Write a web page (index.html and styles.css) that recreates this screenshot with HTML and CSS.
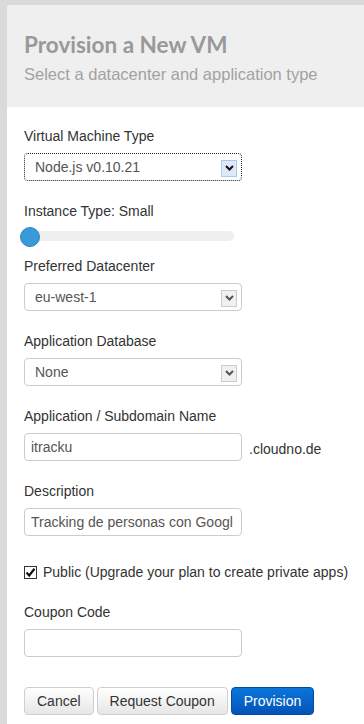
FILE: index.html
```html
<!DOCTYPE html>
<html lang="en">
<head>
<meta charset="utf-8">
<title>Provision a New VM</title>
<link rel="stylesheet" href="styles.css">
</head>
<body>
<div class="panel">
  <div class="panel-head">
    <h1 class="title">Provision a New VM</h1>
    <p class="subtitle">Select a datacenter and application type</p>
  </div>
  <form class="panel-body">
    <div class="group">
      <label class="label">Virtual Machine Type</label>
      <div class="select select-focus">
        <span class="select-text">Node.js v0.10.21</span>
        <span class="arrow arrow-hover"><svg width="9" height="6" viewBox="0 0 9 6"><path d="M1 1 L4.5 4.5 L8 1" fill="none" stroke="#111" stroke-width="2"/></svg></span>
      </div>
    </div>
    <div class="group group-slider">
      <label class="label">Instance Type: Small</label>
      <div class="slider">
        <div class="slider-track"></div>
        <div class="slider-thumb"></div>
      </div>
    </div>
    <div class="group">
      <label class="label">Preferred Datacenter</label>
      <div class="select">
        <span class="select-text">eu-west-1</span>
        <span class="arrow"><svg width="9" height="6" viewBox="0 0 9 6"><path d="M1 1 L4.5 4.5 L8 1" fill="none" stroke="#555" stroke-width="2"/></svg></span>
      </div>
    </div>
    <div class="group">
      <label class="label">Application Database</label>
      <div class="select">
        <span class="select-text">None</span>
        <span class="arrow"><svg width="9" height="6" viewBox="0 0 9 6"><path d="M1 1 L4.5 4.5 L8 1" fill="none" stroke="#555" stroke-width="2"/></svg></span>
      </div>
    </div>
    <div class="group">
      <label class="label">Application / Subdomain Name</label>
      <div class="input-row">
        <div class="input">itracku</div>
        <span class="suffix">.cloudno.de</span>
      </div>
    </div>
    <div class="group">
      <label class="label">Description</label>
      <div class="input">Tracking de personas con Googl</div>
    </div>
    <div class="group group-check">
      <label class="check-row">
        <span class="checkbox"><svg width="11" height="11" viewBox="0 0 11 11"><path d="M1.5 5.5 L4.2 8.5 L9.5 1.8" fill="none" stroke="#111" stroke-width="2.2"/></svg></span>
        <span class="check-text">Public (Upgrade your plan to create private apps)</span>
      </label>
    </div>
    <div class="group group-last">
      <label class="label">Coupon Code</label>
      <div class="input"></div>
    </div>
    <div class="actions">
      <span class="btn">Cancel</span>
      <span class="btn">Request Coupon</span>
      <span class="btn btn-primary">Provision</span>
    </div>
  </form>
</div>
</body>
</html>
```
FILE: styles.css
```css
html, body {
  margin: 0;
  padding: 0;
  height: 100%;
  overflow: hidden;
}
body {
  background: #dadada;
  font-family: "Liberation Sans", Arial, sans-serif;
  font-size: 14px;
  color: #333;
}
.panel {
  margin: 5px 0 0 7px;
  background: #fff;
  border-radius: 4px 0 0 0;
  min-height: 730px;
  overflow: hidden;
}
.panel-head {
  background: #efefef;
  padding: 27px 17px 23px;
}
.title {
  margin: 0;
  font-family: Lato, "Liberation Sans", sans-serif;
  font-weight: 700;
  font-size: 22.5px;
  line-height: 26px;
  color: #999;
}
.subtitle {
  margin: 6px 0 0;
  font-size: 16.5px;
  line-height: 20px;
  color: #a2a2a2;
}
.panel-body {
  padding: 19px 0 0 17px;
  display: flex;
  flex-direction: column;
}
.group {
  display: flex;
  flex-direction: column;
  margin-bottom: 20px;
}
.group-slider {
  margin-bottom: 9px;
}
.group-check {
  padding-top: 6px;
}
.group-last {
  margin-bottom: 30px;
}
.label {
  line-height: 20px;
  margin-bottom: 7px;
  color: #333;
}
.select {
  width: 218px;
  height: 28px;
  box-sizing: border-box;
  border: 1px solid #ccc;
  border-radius: 4px;
  display: flex;
  align-items: center;
  justify-content: space-between;
  padding: 0 4px 0 10px;
  color: #555;
}
.select-focus {
  border: 1px dotted #222;
}
.select-text {
  line-height: 20px;
}
.arrow {
  width: 16px;
  height: 17px;
  box-sizing: border-box;
  border: 1px solid #ccc;
  background: #f0f0f0;
  display: flex;
  align-items: center;
  justify-content: center;
  margin-top: 2px;
}
.arrow-hover {
  background: #dde9f7;
  border-color: #a9c9ee;
}
.slider {
  position: relative;
  margin-top: -1px;
  height: 20px;
  width: 214px;
  margin-left: -4px;
}
.slider-track {
  margin-top: 4px;
  height: 10px;
  border-radius: 5px;
  background: #efefef;
}
.slider-thumb {
  position: absolute;
  left: 0;
  top: 0;
  width: 20px;
  height: 20px;
  box-sizing: border-box;
  border-radius: 50%;
  background: #3a9ad9;
  border: 1px solid #2f86c4;
}
.input-row {
  display: flex;
  align-items: center;
  gap: 7px;
}
.input {
  width: 218px;
  height: 28px;
  box-sizing: border-box;
  border: 1px solid #ccc;
  border-radius: 4px;
  padding: 0 6px;
  line-height: 26px;
  color: #555;
  white-space: nowrap;
  overflow: hidden;
}
.suffix {
  color: #333;
  margin-top: 4px;
}
.check-row {
  display: flex;
  align-items: center;
  gap: 6px;
  line-height: 20px;
}
.check-text {
  white-space: nowrap;
}
.checkbox {
  flex: none;
  width: 13px;
  height: 13px;
  box-sizing: border-box;
  border: 1px solid #333;
  background: #fff;
  display: flex;
  align-items: center;
  justify-content: center;
}
.actions {
  display: flex;
  gap: 3px;
}
.btn {
  height: 28px;
  box-sizing: border-box;
  padding: 0 12px;
  line-height: 26px;
  border: 1px solid #cfcfcf;
  border-radius: 4px;
  background: linear-gradient(#ffffff, #e6e6e6);
  color: #333;
}
.btn-primary {
  background: linear-gradient(#0a76dc, #0552b6);
  border-color: #0549a8;
  color: #fff;
}
```
